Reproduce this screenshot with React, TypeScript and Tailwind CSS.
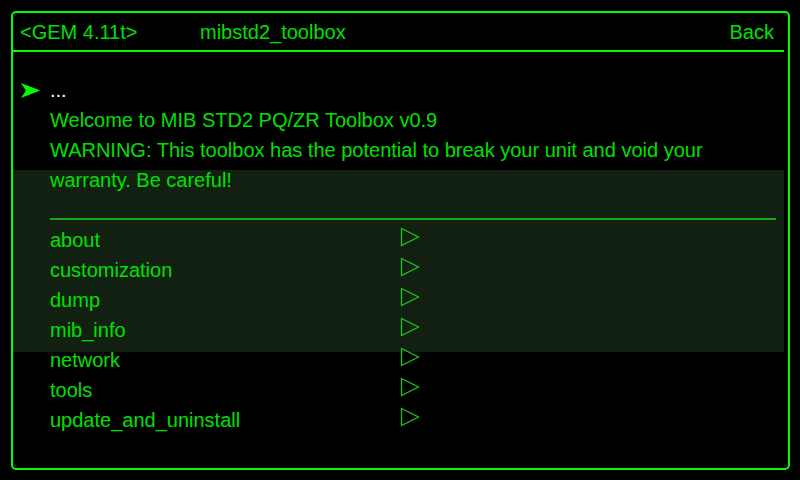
const items = [
  'about',
  'customization',
  'dump',
  'mib_info',
  'network',
  'tools',
  'update_and_uninstall',
];

function Cursor() {
  return (
    <svg width="19" height="15" viewBox="0 0 19 15" className="shrink-0">
      <polygon points="0,0 19,7.5 0,15 5,7.5" fill="#00ff00" />
    </svg>
  );
}

function Play() {
  return (
    <svg width="20" height="20" viewBox="0 0 20 20">
      <polygon
        points="1.5,1.5 18.5,10 1.5,18.5"
        fill="none"
        stroke="#1ec41e"
        strokeWidth="1.3"
      />
    </svg>
  );
}

export default function App() {
  return (
    <div
      className="w-[800px] h-[480px] bg-black pt-[11px] pl-[11px] overflow-hidden text-[20px] text-[#00e000]"
      style={{ fontFamily: '"Liberation Sans", Arial, sans-serif' }}
    >
      <div className="w-[779px] h-[459px] border-2 border-[#00ff00] rounded-[5px] flex flex-col">
        {/* Header */}
        <div className="h-[39px] mr-[4px] border-b-2 border-[#00ff00] flex items-center pl-[7px] pr-[10px] leading-none">
          <span className="w-[180px]">&lt;GEM 4.11t&gt;</span>
          <span>mibstd2_toolbox</span>
          <span className="ml-auto">Back</span>
        </div>

        {/* Body */}
        <div className="relative flex-1 pt-[23px]">
          <div className="absolute left-0 top-[118px] w-[771px] h-[182px] bg-[#122012]" />
          <div className="relative">
            <div className="h-[30px] flex items-center pl-[8px]">
              <Cursor />
              <span className="ml-[10px] text-white leading-[30px]">...</span>
            </div>
            <div className="pl-[37px] leading-[30px]">
              <div>Welcome to MIB STD2 PQ/ZR Toolbox v0.9</div>
              <div>
                WARNING: This toolbox has the potential to break your unit and void your
              </div>
              <div>warranty. Be careful!</div>
              <div className="h-[30px] flex flex-col justify-end pb-[5px] pr-[12px]">
                <div className="h-[2px] bg-[#17a617]" />
              </div>
              {items.map((name) => (
                <div key={name} className="h-[30px] flex">
                  <span className="w-[350px]">{name}</span>
                  <span className="pt-[2px]">
                    <Play />
                  </span>
                </div>
              ))}
            </div>
          </div>
        </div>
      </div>
    </div>
  );
}
